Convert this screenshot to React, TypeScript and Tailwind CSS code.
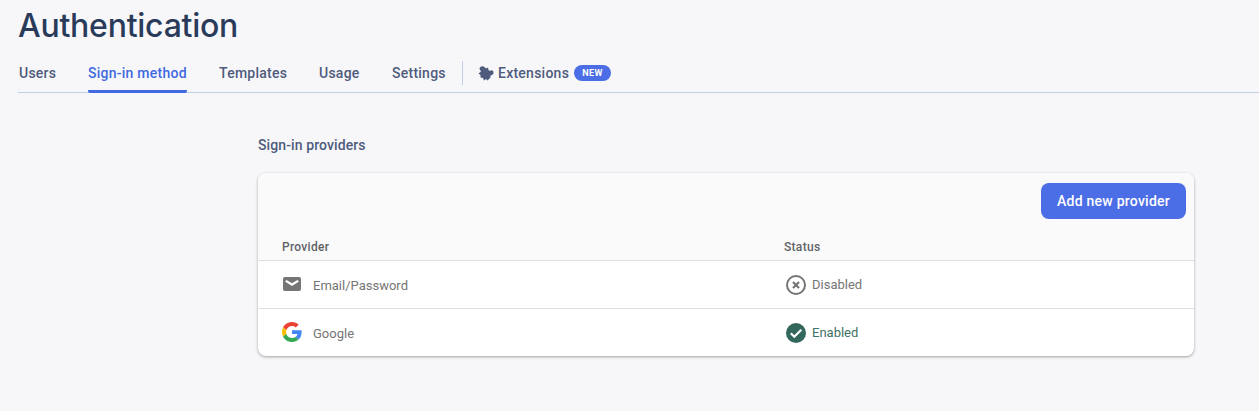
const tabs = [
  { label: "Users", w: "w-[38px]" },
  { label: "Sign-in method", active: true, w: "w-[99px]" },
  { label: "Templates", w: "w-[68px]" },
  { label: "Usage", w: "w-[41px]" },
  { label: "Settings", w: "w-[54px]" },
];

const GoogleIcon = () => (
  <svg viewBox="0 0 48 48" className="w-5 h-5 shrink-0">
    <path fill="#EA4335" d="M24 9.5c3.54 0 6.71 1.22 9.21 3.6l6.85-6.85C35.9 2.38 30.47 0 24 0 14.62 0 6.51 5.38 2.56 13.22l7.98 6.19C12.43 13.72 17.74 9.5 24 9.5z" />
    <path fill="#4285F4" d="M46.98 24.55c0-1.57-.15-3.09-.38-4.55H24v9.02h12.94c-.58 2.96-2.26 5.48-4.78 7.18l7.73 6c4.51-4.18 7.09-10.36 7.09-17.65z" />
    <path fill="#FBBC05" d="M10.53 28.59c-.48-1.45-.76-2.99-.76-4.59s.27-3.14.76-4.59l-7.98-6.19C.92 16.46 0 20.12 0 24c0 3.88.92 7.54 2.56 10.78l7.97-6.19z" />
    <path fill="#34A853" d="M24 48c6.48 0 11.93-2.13 15.89-5.81l-7.73-6c-2.15 1.45-4.92 2.3-8.16 2.3-6.26 0-11.57-4.22-13.47-9.91l-7.98 6.19C6.51 42.62 14.62 48 24 48z" />
  </svg>
);

const MailIcon = () => (
  <svg viewBox="0 0 18 14" className="w-[18px] h-[14px] shrink-0" fill="#757575">
    <path d="M2 0h14a2 2 0 0 1 2 2v10a2 2 0 0 1-2 2H2a2 2 0 0 1-2-2V2a2 2 0 0 1 2-2zm1.500 3L2 4.500l7 4.500 7-4.500L14.500 3 9 6.300z" fillRule="evenodd" />
  </svg>
);

const ExtensionIcon = () => (
  <svg viewBox="0 0 16 16" className="w-4 h-4 shrink-0" fill="#4f5b7c">
    <path d="M1.500 4C1.500 1.500 4.500.5 6.500 2L8 3.500 10 2.500 10.500 5 12 6c1-1.500 3.500-1 3.500 1.500 0 2-1.500 3-3 2.800V12.500L9.500 15.500 8 14l-2 1.500-1-2.500-2.500-.5L2.500 10 .5 8.500 3 6.500z" />
  </svg>
);

const DisabledIcon = () => (
  <svg viewBox="0 0 20 20" className="w-5 h-5 shrink-0" fill="none" stroke="#757575">
    <circle cx="10" cy="10" r="9" strokeWidth="2" />
    <path d="M7 7l6 6M13 7l-6 6" strokeWidth="2.200" />
  </svg>
);

const EnabledIcon = () => (
  <svg viewBox="0 0 20 20" className="w-5 h-5 shrink-0">
    <circle cx="10" cy="10" r="10" fill="#34675c" />
    <path d="M4.800 10.300l3.500 3.500 7-7" fill="none" stroke="#fff" strokeWidth="2.200" />
  </svg>
);

const rows = [
  { name: "Email/Password", icon: <MailIcon />, status: "Disabled", statusIcon: <DisabledIcon />, color: "text-[#757575]", height: "h-[47px]", text: "pt-[3px]" },
  { name: "Google", icon: <GoogleIcon />, status: "Enabled", statusIcon: <EnabledIcon />, color: "text-[#3f7065]", height: "h-[48px]", text: "pt-[2px]" },
];

const App = () => {
  return (
    <div className="h-[411px] overflow-hidden bg-[#f7f7fa] font-['Roboto',sans-serif]">
      <h1 className="pl-[18px] pt-[6px] h-[45px] text-[32px] leading-[40px] text-[#2a3b5a] font-['Inter',sans-serif] font-[450] tracking-[-0.25px]">
        Authentication
      </h1>

      {/* Tabs */}
      <div className="ml-[18px] mt-[9px] h-[39px] flex items-stretch border-b border-[#c3cfe6]">
        <div className="flex items-stretch gap-[32px]">
          {tabs.map((tab, index) => (
            <div
              key={tab.label}
              className={`${tab.w} h-[39px] whitespace-nowrap text-sm font-medium tracking-[0.25px] leading-[18px] pt-[10px] ${
                index === 0 ? "pl-px" : ""
              } ${tab.active ? "text-[#4169e1] border-b-[3px] border-[#4169e1] rounded-b-[2px]" : "text-[#4f5b7c]"}`}
            >
              {tab.label}
            </div>
          ))}
        </div>
        <div className="ml-4 mt-[7px] h-6 w-px bg-[#c3cfe6]" />
        <div className="ml-[15px] mt-[7px] h-[24px] flex items-center gap-[4px] text-sm font-medium tracking-[0.25px] text-[#4f5b7c]">
          <ExtensionIcon />
          Extensions
          <span className="ml-px h-[16px] px-[8px] rounded-full bg-[#4b6de6] text-white text-[9px] font-bold leading-[16px] tracking-[0.5px]">
            NEW
          </span>
        </div>
      </div>

      <div className="ml-[258px] w-[936px]">
        <h2 className="mt-[42px] h-[20px] text-sm leading-[20px] font-medium tracking-[0.1px] text-[#4f5b7c]">
          Sign-in providers
        </h2>

        {/* Card */}
        <div className="mt-[18px] rounded-lg bg-white shadow-[0_1px_3px_rgba(0,0,0,0.35)] overflow-hidden">
          <div className="bg-[#fafafa] h-[88px] border-b border-[#dedede]">
            <div className="flex justify-end pt-[10px] pr-2">
              <button className="h-9 w-[145px] rounded-lg bg-[#4b6de6] text-white text-sm font-medium tracking-[0.25px]">
                Add new provider
              </button>
            </div>
            <div className="flex mt-[20px] text-xs font-medium tracking-[0.3px] leading-4 text-[#5f6368]">
              <div className="w-[526px] pl-6">Provider</div>
              <div>Status</div>
            </div>
          </div>
          {rows.map((row, index) => (
            <div key={row.name} className={`${row.height} flex items-center ${index > 0 ? "border-t border-[#dedede]" : ""}`}>
              <div className="w-[528px] pl-6 flex items-center gap-[11px] text-[13px] text-[#757575]">
                <span className="w-5 flex justify-center -mt-[2px]">{row.icon}</span>
                <span className={row.text}>{row.name}</span>
              </div>
              <div className={`flex items-center gap-[6px] text-[13px] ${row.color}`}>
                {row.statusIcon}
                <span>{row.status}</span>
              </div>
            </div>
          ))}
        </div>
      </div>
    </div>
  );
};

export default App;
